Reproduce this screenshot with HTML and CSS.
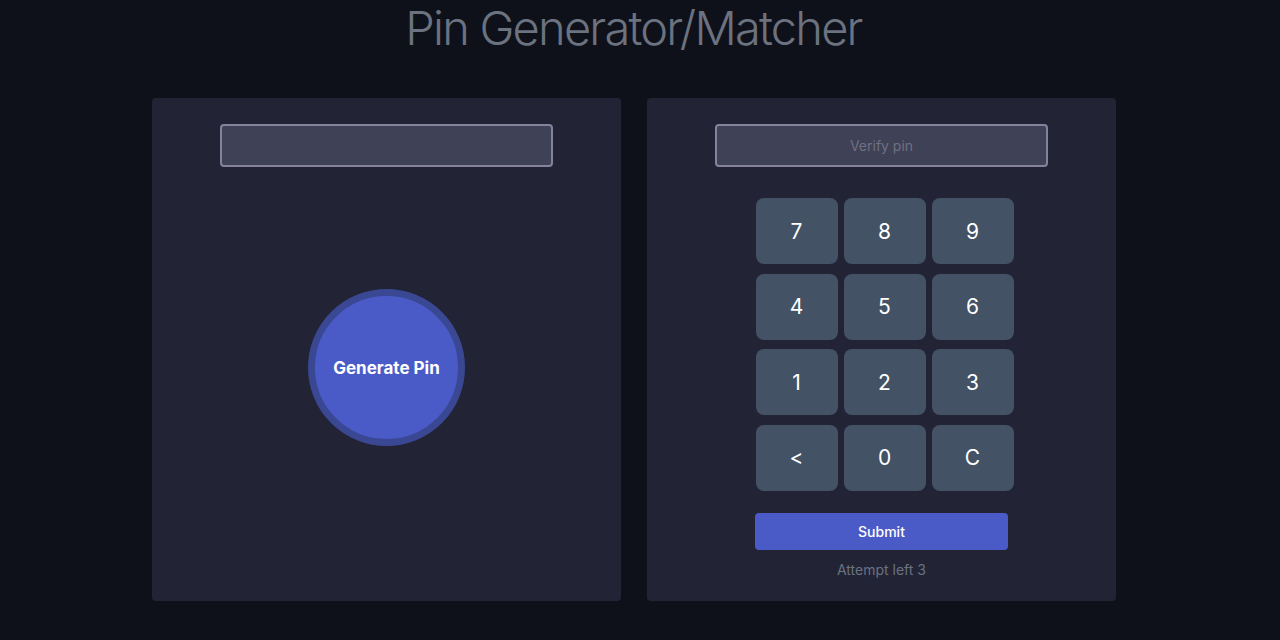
FILE: index.html
```html
<!DOCTYPE html>
<html lang="en">
<head>
  <meta charset="UTF-8">
  <title>Pin Generator/Matcher</title>
  <meta name="viewport" content="width=device-width, initial-scale=1.0">
  <link rel="stylesheet" href="styles.css">
</head>
<body>
  <h1 class="title">Pin Generator/Matcher</h1>
  <div class="cards">
    <div class="card">
      <input type="text" class="pin-input" id="genPin" readonly>
      <button class="gen-btn" id="genBtn">Generate Pin</button>
    </div>
    <div class="card">
      <input type="text" class="pin-input" id="typedPin" placeholder="Verify pin" readonly>
      <div class="keypad">
        <button class="key">7</button>
        <button class="key">8</button>
        <button class="key">9</button>
        <button class="key">4</button>
        <button class="key">5</button>
        <button class="key">6</button>
        <button class="key">1</button>
        <button class="key">2</button>
        <button class="key">3</button>
        <button class="key">&lt;</button>
        <button class="key">0</button>
        <button class="key">C</button>
      </div>
      <button class="submit-btn">Submit</button>
      <p class="attempts">Attempt left 3</p>
    </div>
  </div>
</body>
</html>
```

FILE: styles.css
```css
:root {
  --page: #0f111a;
  --card: #222335;
  --field: #3f4156;
  --field-border: #85839b;
  --key: #435265;
  --blue: #4a5bc7;
  --blue-ring: #3a4894;
  --muted: #6b7280;
  --white: #fff;
}
body {
  margin: 0;
  background: var(--page);
  font-family: Inter, "Noto Sans", sans-serif;
  min-height: 100vh;
}
.title {
  margin: 0;
  padding-top: 4px;
  padding-right: 13px;
  text-align: center;
  font-size: 47px;
  line-height: 48px;
  font-weight: 300;
  color: var(--muted);
  letter-spacing: -1.8px;
}
.cards {
  display: grid;
  grid-template-columns: 469px 469px;
  gap: 26px;
  padding-left: 152px;
  margin-top: 46px;
}
.card {
  background: var(--card);
  border-radius: 4px;
  height: 503px;
  display: flex;
  flex-direction: column;
  align-items: center;
  padding-top: 26px;
  box-sizing: border-box;
}
.pin-input {
  width: 333px;
  height: 43px;
  box-sizing: border-box;
  background: var(--field);
  border: 2px solid var(--field-border);
  border-radius: 4px;
  text-align: center;
  font-family: inherit;
  font-size: 14px;
  color: var(--white);
  outline: none;
}
.pin-input::placeholder {
  color: #6e7083;
}
.gen-btn {
  margin-top: 122px;
  width: 157px;
  height: 157px;
  border-radius: 50%;
  background: var(--blue);
  border: 7px solid var(--blue-ring);
  color: var(--white);
  font-family: inherit;
  font-size: 17px;
  font-weight: 700;
  cursor: pointer;
  padding: 0;
}
.keypad {
  margin-top: 31px;
  margin-left: 6px;
  display: grid;
  grid-template-columns: repeat(3, 82px);
  grid-auto-rows: 66px;
  column-gap: 6px;
  row-gap: 9.5px;
}
.key {
  background: var(--key);
  border: none;
  border-radius: 8px;
  color: var(--white);
  font-family: inherit;
  font-size: 21px;
  cursor: pointer;
}
.submit-btn {
  margin-top: 22px;
  width: 253px;
  height: 37px;
  background: var(--blue);
  border: none;
  border-radius: 4px;
  color: var(--white);
  font-family: inherit;
  font-size: 14px;
  font-weight: 500;
  cursor: pointer;
}
.attempts {
  margin: 10px 0 0;
  font-size: 14px;
  line-height: 20px;
  color: var(--muted);
}
```
